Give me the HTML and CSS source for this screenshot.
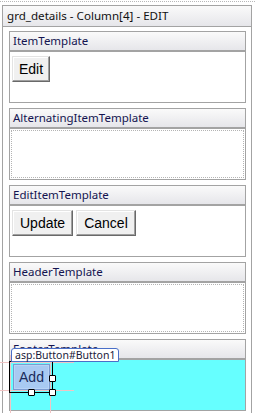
FILE: index.html
```html
<!DOCTYPE html>
<html lang="en">
<head>
    <meta charset="UTF-8">
    <title>grd_details - Column[4] - EDIT</title>
    <link rel="stylesheet" href="styles.css">
</head>
<body>
<div class="ruler"></div>

<div class="panel">
    <div class="panel-title">grd_details - Column[4] - EDIT</div>

    <div class="panel-body">
        <section class="tpl">
            <div class="tpl-head">ItemTemplate</div>
            <div class="tpl-body">
                <button class="btn narrow">Edit</button>
            </div>
        </section>

        <section class="tpl">
            <div class="tpl-head">AlternatingItemTemplate</div>
            <div class="tpl-body empty"><div class="drop"></div></div>
        </section>

        <section class="tpl">
            <div class="tpl-head">EditItemTemplate</div>
            <div class="tpl-body">
                <button class="btn">Update</button>
                <button class="btn">Cancel</button>
            </div>
        </section>

        <section class="tpl">
            <div class="tpl-head">HeaderTemplate</div>
            <div class="tpl-body empty"><div class="drop"></div></div>
        </section>

        <section class="tpl footer">
            <div class="tpl-head">FooterTemplate</div>
            <div class="tpl-body cyan">
                <button class="btn selected">Add</button>
            </div>

            <!-- designer selection overlay -->
            <div class="guide h" style="top: 23px;"></div>
            <div class="guide h" style="top: 51px;"></div>
            <div class="guide v" style="left: 1px;"></div>
            <div class="guide v" style="left: 41px;"></div>
            <div class="sel-box"></div>
            <div class="handle" style="left: 19px; top: 50px;"></div>
            <div class="handle" style="left: 40px; top: 36px;"></div>
            <div class="handle" style="left: 40px; top: 50px;"></div>
            <div class="tag">asp:Button#Button1</div>
        </section>
    </div>
</div>
</body>
</html>
```

FILE: styles.css
```css
body {
    margin: 0;
    background: #fff;
    font-family: "Noto Sans", "DejaVu Sans", sans-serif;
    overflow: hidden;
}

.ruler {
    height: 0;
    margin-top: 1px;
    border-top: 1px dotted #b8b8b8;
}

.panel {
    margin: 3px 0 0 2px;
    width: 248px;
    height: 420px;
    border: 1px solid #a3a3a3;
}

.panel-title {
    height: 20px;
    line-height: 20px;
    padding-left: 4px;
    font-size: 11.6px;
    color: #111;
    background: linear-gradient(#fafafa, #e6e6ea);
    border-bottom: 1px solid #a3a3a3;
}

.panel-body {
    display: flex;
    flex-direction: column;
    gap: 5px;
    padding: 4px 5px 0 6px;
}

.tpl {
    position: relative;
}

.tpl-head {
    height: 18px;
    line-height: 18px;
    padding-left: 3px;
    font-size: 11.5px;
    color: #141450;
    background: linear-gradient(#fafafa, #e6e6ea);
    border: 1px solid #a3a3a3;
}

.tpl-body {
    box-sizing: border-box;
    height: 52px;
    padding: 4px 0 0 2px;
    border: 1px solid #a3a3a3;
    display: flex;
    align-items: flex-start;
    gap: 3px;
}

.tpl-body.empty {
    padding: 1px;
}

.drop {
    flex: 1;
    align-self: stretch;
    border: 1px dotted #b4b4b4;
}

.tpl-body.cyan {
    background: #66ffff;
    padding: 4px 0 0 3px;
}

.btn {
    height: 26px;
    padding: 0 7px;
    font-family: "Liberation Sans", Arial, sans-serif;
    font-size: 14px;
    color: #000;
    background: #f0f0f0;
    border: 1px solid;
    border-color: #e3e3e3 #696969 #696969 #e3e3e3;
    box-shadow: inset -1px -1px #a0a0a0, inset 1px 1px #fff;
}

.btn.narrow {
    padding: 0 6px;
}

.btn.selected {
    width: 37px;
    height: 26px;
    padding: 0;
    color: #1a2a5a;
    background: #a8caf2;
    border-color: #7b9bd0;
    box-shadow: inset 0 0 0 1px #b8d4f6;
}

.guide {
    position: absolute;
    background: #f0c4c4;
}

.guide.h {
    left: -9px;
    width: 74px;
    height: 1px;
}

.guide.v {
    top: 16px;
    width: 1px;
    height: 58px;
}

.sel-box {
    position: absolute;
    left: 0;
    top: 22px;
    width: 42px;
    height: 30px;
    border: 1px solid #000;
}

.handle {
    position: absolute;
    width: 5px;
    height: 5px;
    background: #fff;
    border: 1px solid #000;
    border-radius: 1px;
}

.tag {
    position: absolute;
    left: 2px;
    top: 9px;
    height: 12px;
    line-height: 12px;
    padding: 0 3px;
    font-size: 10.5px;
    color: #1a1a3a;
    background: #fff;
    border: 1px solid #4a6fc8;
    border-radius: 3px 3px 0 0;
}
```
